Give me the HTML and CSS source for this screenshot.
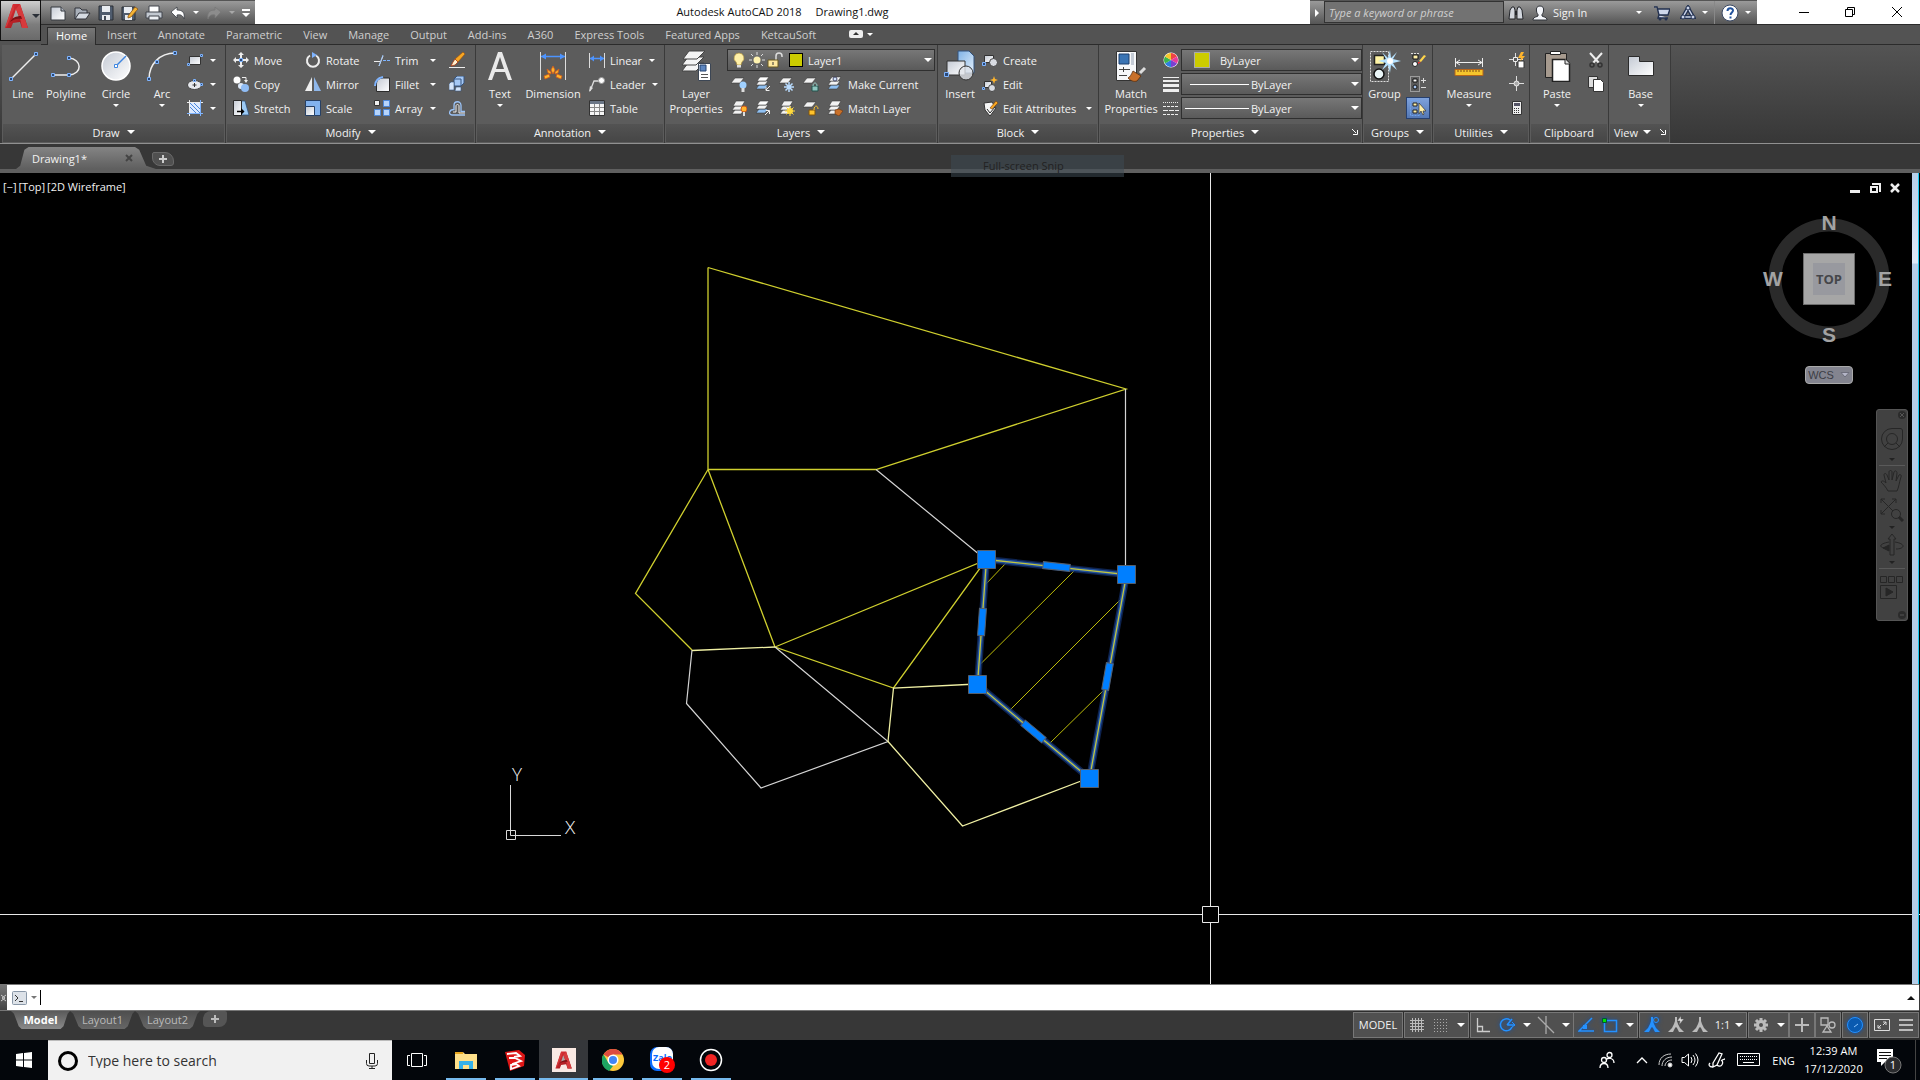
FILE: index.html
```html
<!DOCTYPE html>
<html lang="en">
<head>
<meta charset="utf-8">
<title>Autodesk AutoCAD 2018 - Drawing1.dwg</title>
<link rel="stylesheet" href="styles.css">
</head>
<body>
<svg class="defs" width="0" height="0" aria-hidden="true">
  <defs>
    <linearGradient id="gw" x1="0" y1="0" x2="1" y2="1"><stop offset="0" stop-color="#c4cad4"/><stop offset="1" stop-color="#fff"/></linearGradient>
    <linearGradient id="gb" x1="0" y1="0" x2="1" y2="1"><stop offset="0" stop-color="#7fb2e6"/><stop offset="1" stop-color="#e4f0fb"/></linearGradient>
    <linearGradient id="gr" x1="0" y1="0" x2="1" y2="1"><stop offset="0" stop-color="#e8343a"/><stop offset="1" stop-color="#8e1216"/></linearGradient>
  </defs>
  <symbol id="stack" viewBox="0 0 16 16"><g fill="#f2f2f2" stroke="#3a3a3a" stroke-width=".6"><path d="M4 10h9l-3 4H1z"/><path d="M4 6h9l-3 4H1z"/><path d="M5 1h9l-3 5H2z"/></g></symbol>
  <symbol id="stackb" viewBox="0 0 16 16"><g stroke="#3a3a3a" stroke-width=".6"><path d="M4 9h9l-3 4H1z" fill="#8fc0f2"/><path d="M4 5h9l-3 4H1z" fill="#f2f2f2"/><path d="M5 1h9l-3 4H2z" fill="#fff"/></g></symbol>
  <symbol id="sheet" viewBox="0 0 16 16"><path d="M4 2h9L9 7H0z" fill="#f2f2f2" stroke="#3a3a3a" stroke-width=".6"/></symbol>
  <symbol id="person" viewBox="0 0 16 16"><path d="M8 1c3 0 4 2 3.500 5-.3 2-1 3-1.500 3.500V11c1 .8 4 1 5 3v1H1v-1c1-2 4-2.200 5-3V9.500C5.500 9 4.800 8 4.500 6 4 3 5 1 8 1z" fill="#f3f5fa" stroke="#2f3238"/></symbol>
  <symbol id="annot" viewBox="0 0 16 16"><path d="M7 0h2v4l1 3 2 4 4 4h-5l-2-4-1-1-1 1-2 4H0l4-4 2-4 1-3z"/></symbol>
  <symbol id="logo" viewBox="0 0 26 26"><path d="M9 1h7l8 24h-6l-2-6-7 1-2 5H1z" fill="url(#gr)"/><path d="M12 6l-3 9 6-1z" fill="#aaa6a6"/><path d="M9 1l1 5-7 17-2 2zM16 1l-4 5 4 9 2 10h6z" fill="#d63a3c"/><path d="M6 19c2-4 6-6 11-6l1 3c-5-1-8 0-12 3z" fill="#7d1114"/></symbol>
</svg>

<header class="top">
  <button class="app-btn" aria-label="Application menu"><svg width="26" height="26"><use href="#logo"/></svg><i class="caret dark"></i></button>
  <div class="titlebar">
    <div class="qat">
      <button aria-label="New"><svg width="18" height="16"><path d="M2 2h10l4 4v9H2z" fill="url(#gw)" stroke="#35383e"/><path d="M12 2v4h4" fill="#aeb4bd" stroke="#35383e"/></svg></button>
      <button aria-label="Open"><svg width="18" height="16"><path d="M2 14V3h5l2 2h5v3" fill="#a9b0ba" stroke="#30333a"/><path d="M2 14l4-6h11l-4 6z" fill="#d5dae2" stroke="#30333a"/></svg></button>
      <button aria-label="Save"><svg width="16" height="16"><path d="M1 1h14v14H1z" fill="#4f5c6e" stroke="#2b2e34"/><path d="M4 1h8v6H4zM4 10h8v5H4z" fill="#e8ecf1"/><path d="M6 11h2v4H6z" fill="#444c59"/></svg></button>
      <button aria-label="Save As"><svg width="18" height="16"><path d="M1 2h13v13H1z" fill="#4f5c6e" stroke="#2b2e34"/><path d="M3 2h8v6H3zM4 10h7v5H4z" fill="#e8ecf1"/><path d="M7 11l7-9 3 2-7 8-3 1z" fill="#f5b335" stroke="#7c4a12" stroke-width=".7"/></svg></button>
      <button aria-label="Plot"><svg width="18" height="16"><path d="M4 1h10v7H4z" fill="#fff" stroke="#41454c"/><path d="M1 7h16v6H1z" fill="#c3c9d1" stroke="#41454c"/><path d="M4 11h10v4H4z" fill="#eef1f5" stroke="#41454c"/></svg></button>
      <button aria-label="Undo"><svg width="16" height="16"><path d="M1 7l6-5v3c6 0 8 3 7 9-1-3-3-5-7-4v3z" fill="#fff" stroke="#3b3f46" stroke-width=".8"/></svg></button>
      <button class="narrow" aria-label="Undo list"><i class="caret small"></i></button>
      <button aria-label="Redo"><svg width="16" height="16"><path d="M15 7L9 2v3C3 5 1 8 2 14c1-3 3-5 7-4v3z" fill="#8c8c8c" stroke="#777" stroke-width=".8"/></svg></button>
      <button class="narrow" aria-label="Redo list"><i class="caret small dim"></i></button>
      <button class="narrow bar" aria-label="Customize toolbar"><i class="caret"></i></button>
    </div>
    <h1><span>Autodesk AutoCAD 2018</span><span>Drawing1.dwg</span></h1>
    <div class="info">
      <button class="info-toggle" aria-label="Toggle search"><i class="caret right"></i></button>
      <input type="text" placeholder="Type a keyword or phrase" aria-label="Search help">
      <button class="i24" aria-label="Find"><svg width="16" height="16"><path d="M2 5l2-3h2l1 3v9H1zM14 5l-2-3h-2L9 5v9h6z" fill="#d3d7de" stroke="#24262b"/><path d="M7 6h2v4H7z" fill="#24262b"/></svg></button>
      <button class="signin"><svg width="16" height="16"><use href="#person"/></svg><span>Sign In</span><i class="caret small"></i></button>
      <button class="i24" aria-label="Store"><svg width="16" height="16"><path d="M0 2h3l2 8h9l2-6H4M5 10l-1 3h10" fill="#cdd6ea" stroke="#22304f" stroke-width="1.400"/><circle cx="6" cy="14" r="1.500" fill="#22304f"/><circle cx="12" cy="14" r="1.500" fill="#22304f"/></svg></button>
      <button class="i24 pair" aria-label="A360"><svg width="16" height="16"><path d="M8 3l5 9H3z" fill="none" stroke="#22304f" stroke-width="4"/><path d="M8 3l5 9H3z" fill="none" stroke="#c9d2e8" stroke-width="1.500"/><g fill="#c9d2e8" stroke="#22304f"><circle cx="8" cy="3" r="2"/><circle cx="3" cy="12" r="2"/><circle cx="13" cy="12" r="2"/></g></svg><i class="caret small"></i></button>
      <button class="help" aria-label="Help"><svg width="18" height="18"><circle cx="9" cy="9" r="8" fill="#fff" stroke="#3b4963"/><path d="M6.500 7c0-3.500 5.500-3.500 5.500-.5C12 8.500 9.500 8.500 9.500 11M9.500 12.500v2" fill="none" stroke="#24549e" stroke-width="2"/></svg><i class="caret small"></i></button>
    </div>
    <div class="win">
      <button aria-label="Minimize"><svg width="12" height="12"><path d="M1 6.500h10" stroke="#000"/></svg></button>
      <button aria-label="Restore"><svg width="12" height="12"><path d="M1.500 3.500h7v7h-7zM3.500 3V1.500h7v7H9" fill="none" stroke="#000"/></svg></button>
      <button aria-label="Close"><svg width="12" height="12"><path d="M1 1l10 10M11 1L1 11" stroke="#000"/></svg></button>
    </div>
  </div>
  <nav class="tabs">
    <button class="on">Home</button><button>Insert</button><button>Annotate</button><button>Parametric</button><button>View</button><button>Manage</button><button>Output</button><button>Add-ins</button><button>A360</button><button>Express Tools</button><button>Featured Apps</button><button>KetcauSoft</button>
    <button class="minimize" aria-label="Minimize ribbon"><svg width="14" height="8"><rect width="14" height="8" rx="2" fill="#eee"/><path d="M4 5h6L7 2z" fill="#333"/></svg><i class="caret small"></i></button>
  </nav>
</header>

<section class="ribbon">
  <div class="panel draw">
    <div class="body">
      <button class="big"><svg width="32" height="32"><path d="M5 28L29 4" stroke="#eee" stroke-width="1.500"/><g fill="#2b4a78" stroke="#7fb4ff"><path d="M2.500 27.500h3v3h-3zM27.500 2.500h3v3h-3z"/></g></svg><span>Line</span></button>
      <button class="big"><svg width="32" height="32"><path d="M3 25h16c14-1 13-16 0-17" fill="none" stroke="#eee" stroke-width="1.500"/><g fill="#2b4a78" stroke="#7fb4ff"><path d="M1.500 23.500h3v3h-3zM17.500 23.500h3v3h-3zM17.500 6.500h3v3h-3z"/></g></svg><span>Polyline</span></button>
      <button class="big"><svg width="32" height="32"><circle cx="16" cy="16" r="14" fill="url(#gw)" stroke="#fff" stroke-width="1.500"/><path d="M16 16L26 6" stroke="#3f86e0" stroke-width="1.500"/><path d="M14.500 14.500h3v3h-3z" fill="#fff" stroke="#3f86e0"/></svg><span>Circle</span><i class="caret small"></i></button>
      <button class="big"><svg width="32" height="32"><path d="M3 29C3 14 14 3 29 3" fill="none" stroke="#eee" stroke-width="1.500"/><g fill="#2b4a78" stroke="#7fb4ff"><path d="M1.500 27.500h3v3h-3zM9.500 10.500h3v3h-3zM27.500 1.500h3v3h-3z"/></g></svg><span>Arc</span><i class="caret small"></i></button>
      <div class="col">
        <button aria-label="Rectangle"><svg width="16" height="16"><path d="M2.500 4.500h11v8h-11z" fill="url(#gw)" stroke="#333"/><g fill="#2b4a78" stroke="#7fb4ff"><path d="M.5 11.500h2v2h-2zM13.500 2.500h2v2h-2z"/></g></svg><i class="caret small"></i></button>
        <button aria-label="Ellipse"><svg width="16" height="16"><ellipse cx="7.500" cy="9" rx="7" ry="4.500" fill="#e7e9ee" stroke="#444"/><path d="M7.500 7v4M5.500 9h4" stroke="#333"/><g fill="#2b4a78" stroke="#7fb4ff"><path d="M6.500 3.500h2v2h-2zM13.500 7.500h2v2h-2z"/></g></svg><i class="caret small"></i></button>
        <button aria-label="Hatch"><svg width="16" height="16"><path d="M3 3h10v10H3z" fill="#dceaff"/><path d="M3 3l10 10M3 7l6 6M7 3l6 6" stroke="#4b86d8"/><path d="M0 2.500h16M2.500 0v16" stroke="#eee"/><path d="M13.500 0v16M0 13.500h16" stroke="#7fb4ff"/></svg><i class="caret small"></i></button>
      </div>
    </div>
    <button class="ptitle">Draw<i class="caret"></i></button>
  </div>

  <div class="panel modify">
    <div class="body">
      <div class="col">
        <button><svg width="16" height="16"><path d="M8 0l3 3H5zM8 16l3-3H5zM0 8l3-3v6zM16 8l-3-3v6z" fill="#eee"/><path d="M8 3v3M8 10v3M3 8h3M10 8h3" stroke="#eee" stroke-width="2"/><path d="M6.500 6.500h3v3h-3z" fill="#2b4a78" stroke="#7fb4ff"/></svg>Move</button>
        <button><svg width="16" height="16"><circle cx="4" cy="4" r="3.500" fill="#fff"/><circle cx="8" cy="10" r="3" fill="#dce8f8"/><circle cx="12" cy="12" r="4" fill="#8fbcf5"/><path d="M9 1.500h4v3" fill="none" stroke="#eee"/><path d="M11 4h4l-2 3z" fill="#eee"/></svg>Copy</button>
        <button><svg width="16" height="16"><path d="M8 1h4l4 14H8z" fill="#9ccaf5" stroke="#274a77" stroke-width=".7"/><path d="M.5.500h8v15h-8z" fill="url(#gw)" stroke="#2b2b2b"/><path d="M4 11.500h6" stroke="#000" stroke-width="1.500"/><path d="M8 8l3.500 3.500L8 15z"/></svg>Stretch</button>
      </div>
      <div class="col">
        <button><svg width="16" height="16"><path d="M5 3.500a6 6 0 1 0 6 0" fill="none" stroke="#eee" stroke-width="2"/><path d="M7 0l5 3-5 3z" fill="#7fb4ff"/></svg>Rotate</button>
        <button><svg width="16" height="16"><path d="M7 1v14H0z" fill="#eee"/><path d="M9 1v14h7z" fill="#8fb7ea"/></svg>Mirror</button>
        <button><svg width="16" height="16"><path d="M.5.500h15v15h-15z" fill="#82b2ee" stroke="#274064"/><path d="M.5 6.500h9v9h-9z" fill="url(#gw)" stroke="#274064"/></svg>Scale</button>
      </div>
      <div class="col">
        <button class="spread"><svg width="16" height="16"><path d="M0 9.500h6M9 4L5 14" stroke="#eee"/><path d="M9 3L5 14" stroke="#9cc4f8"/><path d="M9 8.500h3M13 8.500h3" stroke="#7fb4ff"/></svg><span>Trim</span><i class="caret small"></i></button>
        <button class="spread"><svg width="16" height="16"><path d="M2.500 15.500V8c0-4 3-6 7-6h6v13.500z" fill="url(#gw)" stroke="#2b2b2b"/><path d="M1 10C1 5 4 2 9 1" fill="none" stroke="#7fb4ff" stroke-width="2"/></svg><span>Fillet</span><i class="caret small"></i></button>
        <button class="spread"><svg width="16" height="16"><path d="M.5.500h5v5h-5z" fill="#eee" stroke="#333"/><g fill="#b6d4fb" stroke="#4e88d8"><path d="M9.500.500h6v6h-6zM.5 9.500h6v6h-6zM9.500 9.500h6v6h-6z"/></g></svg><span>Array</span><i class="caret small"></i></button>
      </div>
      <div class="col">
        <button aria-label="Erase"><svg width="16" height="16"><path d="M14 0l2 2-7 8-3-3z" fill="#f6a623" stroke="#9a4d08" stroke-width=".6"/><path d="M6 7l3 3-3 3-4 1 2-4z" fill="#fff1cf" stroke="#b23b12" stroke-width=".8"/><path d="M0 15.500h16" stroke="#eee"/></svg></button>
        <button aria-label="Explode"><svg width="16" height="16"><path d="M5 3l3-3h7v7l-3 3H5z" fill="#a5c8f5" stroke="#36557f"/><path d="M5 3h7v7" fill="none" stroke="#36557f"/><path d="M0 8l2-2h3v8H0zM7 11h5v4H6z" fill="#d5e5fa" stroke="#36557f" stroke-width=".6"/></svg></button>
        <button aria-label="Offset"><svg width="16" height="16"><path d="M16 11.500h-4v-6c0-5-7-5-7 0v4c-5 0-6 5-2 5.500h13" fill="none" stroke="#9cc4f8" stroke-width="1.300"/><path d="M16 13h-6V6c0-2-3-2-3 0v6H4" fill="none" stroke="#eee"/></svg></button>
      </div>
    </div>
    <button class="ptitle">Modify<i class="caret"></i></button>
  </div>

  <div class="panel annotation">
    <div class="body">
      <button class="big"><svg width="32" height="32"><path d="M14 2h4l10 28h-4l-3-8H11l-3 8H4zM16 7l-4 12h8z" fill="#e9e9e9"/></svg><span>Text</span><i class="caret small"></i></button>
      <button class="big"><svg width="32" height="32"><path d="M3.500 2v28M28.500 2v28" stroke="#ddd"/><path d="M4 6.500h24" stroke="#4d94ff" stroke-width="1.500"/><path d="M4 6.500l5-3v6zM28 6.500l-5-3v6z" fill="#4d94ff"/><g fill="#ffb52c" stroke="#d0591a" stroke-width=".8"><path d="M16 16l2 4-2 4-2-4zM10 19l4 3v2l-3-1zM22 19l-4 3v2l3-1zM7 26l5-2 1 3-5 2zM25 26l-5-2-1 3 5 2z"/></g></svg><span>Dimension</span></button>
      <div class="col">
        <button class="spread"><svg width="16" height="16"><path d="M.5 1v15M15.500 1v15" stroke="#ddd"/><path d="M1 6.500h14" stroke="#4d94ff" stroke-width="1.500"/><path d="M1 6.500l4-3v6zM15 6.500l-4-3v6z" fill="#4d94ff"/></svg><span>Linear</span><i class="caret small"></i></button>
        <button class="spread wide"><svg width="16" height="16"><path d="M1 15L5 5h6" fill="none" stroke="#ddd" stroke-width="1.300"/><path d="M0 16l1-6 3 2z" fill="#ddd"/><circle cx="12.500" cy="4.500" r="3" fill="#fff" stroke="#999"/></svg><span>Leader</span><i class="caret small"></i></button>
        <button><svg width="16" height="16"><path d="M.5.500h15v15h-15z" fill="#f5f5f5" stroke="#333"/><path d="M1 1h14v3H1z" fill="#6b7686"/><path d="M1 7.500h14M1 11.500h14M5.500 4v11M10.500 4v11" stroke="#888"/></svg>Table</button>
      </div>
    </div>
    <button class="ptitle">Annotation<i class="caret"></i></button>
  </div>

  <div class="panel layers">
    <div class="body">
      <button class="big"><svg width="32" height="32"><g fill="#f4f4f4" stroke="#444"><path d="M8 13h16l-8 8H2z"/><path d="M8 7h16l-8 8H2z"/><path d="M9 1h16l-8 8H3z"/></g><path d="M18.500 13.500h12v17h-12z" fill="#fff" stroke="#3c4654"/><path d="M20 15h6v6h-6z" fill="#5d86c0" stroke="#25436f"/><path d="M21 24.500h7M21 27.500h7" stroke="#555"/></svg><span>Layer<br>Properties</span></button>
      <div class="layer-tools">
        <label class="combo"><svg width="16" height="16"><path d="M8 1a5 5 0 0 1 3 9l-1 3H6l-1-3a5 5 0 0 1 3-9z" fill="#fff0a8" stroke="#a58a3b" stroke-width=".7"/><path d="M6 13h4v2.500H6z" fill="#ddd"/></svg><svg width="16" height="16"><circle cx="8" cy="8" r="3.500" fill="#fff3b0"/><path d="M8 0v3M8 13v3M0 8h3M13 8h3M2 2l2 2M12 12l2 2M14 2l-2 2M4 12l-2 2" stroke="#ddd"/></svg><svg width="16" height="16"><path d="M9 8V4c0-4 6-4 6 0v1" fill="none" stroke="#ddd" stroke-width="1.500"/><path d="M1 8h10v7H1z" fill="#ffe9a0" stroke="#6b5a20"/><path d="M6 10v3" stroke="#333"/></svg><i class="swatch framed"></i><select aria-label="Layer"><option>Layer1</option></select><i class="caret"></i></label>
        <div class="icon-row">
          <button aria-label="Off"><svg width="16" height="16"><use href="#sheet"/><circle cx="12" cy="9" r="3.500" fill="#9fd0ff"/><path d="M10.500 12h3v4h-3z" fill="#ddd"/></svg></button>
          <button aria-label="Isolate"><svg width="16" height="16"><use href="#stackb"/><path d="M15 10l-4 4M11 11v3.500h3.500" stroke="#eee" fill="none"/></svg></button>
          <button aria-label="Freeze"><svg width="16" height="16"><use href="#sheet"/><path d="M10 6v10M5 11h10M6.500 7.500l7 7M13.500 7.500l-7 7" stroke="#b9dcff" stroke-width="1.500"/></svg></button>
          <button aria-label="Lock"><svg width="16" height="16"><use href="#sheet"/><path d="M9 10h6v5H9z" fill="#8ec5bf" stroke="#23524c"/><path d="M10 10c0-4 4-4 4 0" fill="none" stroke="#9fd3cd"/></svg></button>
          <button class="text"><svg width="16" height="16"><use href="#stackb"/><circle cx="8" cy="3" r="2" fill="#cfe3fb" stroke="#446"/></svg>Make Current</button>
        </div>
        <div class="icon-row">
          <button aria-label="Turn all on"><svg width="16" height="16"><use href="#stack"/><circle cx="13" cy="9" r="3" fill="#ffb52c" stroke="#d0591a"/><path d="M12 12h2v4h-2z" fill="#ddd"/></svg></button>
          <button aria-label="Unisolate"><svg width="16" height="16"><use href="#stackb"/><path d="M10 15l4-4M11 10.500h3.500V14" stroke="#eee" fill="none"/></svg></button>
          <button aria-label="Thaw all"><svg width="16" height="16"><use href="#stack"/><circle cx="11" cy="11" r="3" fill="#ffd93b"/><path d="M11 6v10M6 11h10M7.500 7.500l7 7M14.500 7.500l-7 7" stroke="#ffd93b"/></svg></button>
          <button aria-label="Unlock"><svg width="16" height="16"><use href="#sheet"/><path d="M6 10h6v5H6z" fill="#ffc32c" stroke="#80540c"/><path d="M11 10c0-5 4-5 4-1" fill="none" stroke="#ffc32c"/></svg></button>
          <button class="text"><svg width="16" height="16"><use href="#stack"/><path d="M8 10l4-1 4 2-4 5-4-2z" fill="#c8702a" stroke="#6b3510" stroke-width=".6"/></svg>Match Layer</button>
        </div>
      </div>
    </div>
    <button class="ptitle">Layers<i class="caret"></i></button>
  </div>

  <div class="panel block">
    <div class="body">
      <button class="big"><svg width="32" height="32"><path d="M14 1h11l5 5v17H14z" fill="url(#gb)" stroke="#33527c"/><path d="M3 11h18v14H3z" fill="url(#gw)" stroke="#333"/><circle cx="22" cy="23" r="7" fill="#dfe2e8" fill-opacity=".8" stroke="#333"/><path d="M.5 22.500h4v4h-4z" fill="#2b4a78" stroke="#7fb4ff"/></svg><span>Insert</span></button>
      <div class="col">
        <button><svg width="16" height="16"><path d="M2.500 3.500h9v7h-9z" fill="url(#gw)" stroke="#333"/><circle cx="11.500" cy="10.500" r="4" fill="#d8dbe2" stroke="#444"/><path d="M.5 10.500h3v3h-3z" fill="#2b4a78" stroke="#7fb4ff"/></svg>Create</button>
        <button><svg width="16" height="16"><path d="M2.500 5.500h7v6h-7z" fill="url(#gw)" stroke="#333"/><circle cx="10" cy="12" r="3.500" fill="#d8dbe2" stroke="#444"/><path d="M.5 11.500h2v2h-2z" fill="#2b4a78" stroke="#7fb4ff"/><path d="M12 0l1 3 3 1-3 1-1 3-1-3-3-1 3-1z" fill="#ffb52c"/></svg>Edit</button>
        <button class="spread"><svg width="16" height="16"><path d="M2 3l8-1 4 6-6 8-5-6z" fill="#f5f5f5" stroke="#333"/><path d="M5 9l3 4 5-6" fill="none" stroke="#222"/><path d="M8 8l6-7 2 2-6 6z" fill="#f6a623" stroke="#7c3e08" stroke-width=".6"/></svg><span>Edit Attributes</span><i class="caret small"></i></button>
      </div>
    </div>
    <button class="ptitle">Block<i class="caret"></i></button>
  </div>

  <div class="panel properties">
    <div class="body">
      <button class="big"><svg width="32" height="32"><path d="M1.500 1.500h20v29h-20z" fill="#f7f8fa" stroke="#333"/><path d="M4 4h10v10H4z" fill="#3a74b4" stroke="#1d3f6d"/><path d="M16 3h3v12h-3z" fill="#c5ccd6"/><path d="M4 19.500h11M4 25.500h8M8.500 17v5" stroke="#444"/><path d="M30 18l-5 5" stroke="#ddd" stroke-width="3"/><path d="M18 21l8 5-4 5c-3 1-6 0-9-3 2-1 3-3 5-7z" fill="#c8702a" stroke="#5b2e0c" stroke-width=".8"/></svg><span>Match<br>Properties</span></button>
      <div class="col prop-icons">
        <svg width="16" height="16"><circle cx="8" cy="8" r="7.500" fill="#fff"/><path d="M8 8V1a7 7 0 0 1 6 3.500z" fill="#e44"/><path d="M8 8l6-3.500a7 7 0 0 1 0 7z" fill="#e83a9a"/><path d="M8 8l6 3.500A7 7 0 0 1 8 15z" fill="#7a3fd0"/><path d="M8 8v7a7 7 0 0 1-6-3.500z" fill="#2f7de0"/><path d="M8 8l-6 3.500a7 7 0 0 1 0-7z" fill="#3cb54a"/><path d="M8 8L2 4.500A7 7 0 0 1 8 1z" fill="#f5c52c"/></svg>
        <svg width="16" height="16"><path d="M0 1.500h16" stroke="#eee"/><path d="M0 5h16" stroke="#eee" stroke-width="2"/><path d="M0 9.500h16" stroke="#eee" stroke-width="3"/><path d="M0 14.500h16" stroke="#eee" stroke-width="3"/></svg>
        <svg width="16" height="16" stroke="#eee"><path d="M0 2.500h16" stroke-dasharray="1 1"/><path d="M0 6.500h16" stroke-dasharray="3 1"/><path d="M0 10.500h16" stroke-dasharray="5 1"/><path d="M0 14.500h16" stroke-dasharray="3 1"/></svg>
      </div>
      <div class="col">
        <label class="combo"><i class="swatch plain"></i><select aria-label="Color"><option>ByLayer</option></select><i class="caret"></i></label>
        <label class="combo line"><i class="rule"></i><select aria-label="Lineweight"><option>ByLayer</option></select><i class="caret"></i></label>
        <label class="combo line long"><i class="rule"></i><select aria-label="Linetype"><option>ByLayer</option></select><i class="caret"></i></label>
      </div>
    </div>
    <button class="ptitle">Properties<i class="caret"></i><svg class="launch" width="6" height="6"><path d="M0 0l4 4M5.500 1v4.500H1" fill="none" stroke="#fff"/></svg></button>
  </div>

  <div class="panel groups">
    <div class="body">
      <button class="big"><svg width="32" height="32"><path d="M1.500 1.500h18v30h-18z" fill="none" stroke="#ddd" stroke-dasharray="2 1"/><path d="M5.500 5.500h10v9h-10z" fill="#fff4a5" stroke="#222" stroke-width="1.500"/><circle cx="10" cy="24" r="5" fill="#eaf5f7" stroke="#111" stroke-width="1.500"/><path d="M21 0l1 8 6-6-4 7 8 2-8 2 4 7-6-5-1 8-2-8-6 5 4-7-8-2 8-2-4-7 6 6z" fill="#b6e2ff"/><circle cx="21" cy="11" r="3" fill="#fff"/></svg><span>Group</span></button>
      <div class="col">
        <button aria-label="Ungroup"><svg width="16" height="16"><path d="M1 1.500h8" stroke="#ddd" stroke-dasharray="2 1"/><path d="M3 3h5v4H3z" fill="#fff0a8" stroke="#111"/><circle cx="5" cy="12" r="2.500" fill="#fff" stroke="#222"/><path d="M9 9l5-6 2 1-5 6z" fill="#ffd54a"/><path d="M8 10l3 0-3 2z" fill="#e33"/></svg></button>
        <button aria-label="Group edit"><svg width="16" height="16"><path d="M.5.500h9v15h-9z" fill="none" stroke="#ddd" stroke-dasharray="1 1"/><path d="M3 3h4v3H3z" fill="#fff" stroke="#111"/><circle cx="5" cy="11" r="2" fill="#a9c8f2" stroke="#111"/><path d="M11 4.500h5M13.500 2v5M11 11.500h5" stroke="#ddd"/></svg></button>
        <button class="active" aria-label="Group selection"><svg width="16" height="16"><path d="M.5.500h9v15h-9z" fill="none" stroke="#6fa3ee" stroke-dasharray="2 1"/><path d="M3 3h4v3H3zM3 10h4v3H3z" fill="#fff0a8" stroke="#222"/><path d="M9 3v11l2-3 2 4 1-1-1-3h3z" fill="#fff0a8" stroke="#333" stroke-width=".7"/></svg></button>
      </div>
    </div>
    <button class="ptitle">Groups<i class="caret"></i></button>
  </div>

  <div class="panel utilities">
    <div class="body">
      <button class="big"><svg width="32" height="32"><path d="M2.500 8v9M29.500 8v9M3 12.500h26M7 10l-4 2.500L7 15M25 10l4 2.500-4 2.500" fill="none" stroke="#eee"/><path d="M2 19.500h28v6H2z" fill="#f5c52c" stroke="#b5651a"/><path d="M5 20v2M8 20v2M11 20v2M14 20v2M17 20v2M20 20v2M23 20v2M26 20v2" stroke="#7c4a12"/></svg><span>Measure</span><i class="caret small"></i></button>
      <div class="col">
        <button aria-label="Quick select"><svg width="16" height="16"><path d="M0 7.500h14M6.500 1v13" stroke="#ddd"/><path d="M4.500 5.500h4v4h-4z" fill="#5c5c5c" stroke="#eee"/><path d="M12 0L9 6h3l-1 4 5-6h-3l2-4z" fill="#ffb52c"/><path d="M9 9h6v7H9z" fill="#fff" stroke="#333"/></svg></button>
        <button aria-label="ID point"><svg width="16" height="16"><path d="M0 7.500h15M7.500 0v15" stroke="#ddd"/><circle cx="7.500" cy="7.500" r="2.500" fill="#aaa" stroke="#eee"/></svg></button>
        <button aria-label="Calculator"><svg width="16" height="16"><path d="M3.500 1.500h9v13h-9z" fill="#eee" stroke="#333"/><path d="M5 3h6v3H5z" fill="#556"/><path d="M5 8.500h6M5 10.500h6M5 12.500h6" stroke="#333" stroke-dasharray="1 1"/></svg></button>
      </div>
    </div>
    <button class="ptitle">Utilities<i class="caret"></i></button>
  </div>

  <div class="panel clipboard">
    <div class="body">
      <button class="big"><svg width="32" height="32"><path d="M4.500 3.500h21v24h-21z" fill="#a69a8e" stroke="#222"/><path d="M9.500 1.500h10v3h-10z" fill="#fff" stroke="#222"/><path d="M11.500 9.500h13l4 4v18h-17z" fill="#fff" stroke="#222" stroke-width="1.500"/><path d="M24 9v5h5" fill="#ddd" stroke="#222"/></svg><span>Paste</span><i class="caret small"></i></button>
      <div class="col">
        <button aria-label="Cut"><svg width="16" height="16"><path d="M2 1l9 10M14 1L5 11" stroke="#eee" stroke-width="2"/><circle cx="4" cy="13" r="2" fill="none" stroke="#333" stroke-width="1.500"/><circle cx="12" cy="13" r="2" fill="none" stroke="#333" stroke-width="1.500"/></svg></button>
        <button aria-label="Copy clip"><svg width="16" height="16"><path d="M.5.500h9v11h-9z" fill="#ddd" stroke="#333"/><path d="M5.500 3.500h7l3 3v9h-10z" fill="#fff" stroke="#333"/></svg></button>
      </div>
    </div>
    <span class="ptitle">Clipboard</span>
  </div>

  <div class="panel view">
    <div class="body">
      <button class="big"><svg width="32" height="32"><path d="M3.500 6.500h11v5h14v14h-25z" fill="url(#gw)" stroke="#2b2b2b"/></svg><span>Base</span><i class="caret small"></i></button>
    </div>
    <button class="ptitle">View<i class="caret"></i><svg class="launch" width="6" height="6"><path d="M0 0l4 4M5.500 1v4.500H1" fill="none" stroke="#fff"/></svg></button>
  </div>
</section>

<div class="filetabs">
  <button class="file on"><span>Drawing1*</span><svg width="8" height="8"><path d="M1 1l6 6M7 1L1 7" stroke="#444" stroke-width="2"/></svg></button>
  <button class="add" aria-label="New drawing"><svg width="8" height="8"><path d="M4 0v8M0 4h8" stroke="#ccc" stroke-width="2"/></svg></button>
  <div class="snip">Full-screen Snip</div>
</div>

<main class="viewport">
  <svg class="drawing" width="100%" height="100%">
    <g fill="none" stroke="#cfcf2e" stroke-width="1.300">
      <path d="M708 94.500L1126 216L876 296.500H708V94.500M708 296.500L635.500 420.500L692 477M708 296.500L775 474L893.500 515L986 387L775 474"/>
    </g>
    <g fill="none" stroke="#d4d4d4" stroke-width="1.200">
      <path d="M876 296.500L986 387M1125.500 216V401M692 477L686.500 530.500L761 615L888 568.500L775 474"/>
    </g>
    <g fill="none" stroke="#f0f0a4" stroke-width="1.300">
      <path d="M692 477.500L775 474M977 511L893.500 515L888 568.500L962.500 653L1089 605"/>
    </g>
    <path d="M1007 389L985 412M1074 398L977.500 494M1122 425L1009 538M1104 517L1049 571" stroke="#bcbc08"/>
    <path class="glow" d="M986.500 386.500L1126.500 401.500L1089.500 605.500L977.500 511.500z"/>
    <path class="glow core" d="M986.500 386.500L1126.500 401.500L1089.500 605.500L977.500 511.500z"/>
    <path d="M986.500 386.500L1126.500 401.500L1089.500 605.500L977.500 511.500z" fill="none" stroke="#c3c741" stroke-width="1.300"/>
    <g fill="#007fff" stroke="#555f6c">
      <path d="M977.500 377.500h18v18h-18zM1117.500 392.500h18v18h-18zM968.500 502.500h18v18h-18zM1080.500 596.500h18v18h-18z"/>
      <rect x="-13.500" y="-3.500" width="27" height="7" transform="translate(1056.500 393.500) rotate(6)"/>
      <rect x="-13.500" y="-3.500" width="27" height="7" transform="translate(982 449) rotate(94)"/>
      <rect x="-13.500" y="-3.500" width="27" height="7" transform="translate(1107.500 503.500) rotate(100)"/>
      <rect x="-13.500" y="-3.500" width="27" height="7" transform="translate(1033.500 558.500) rotate(40)"/>
    </g>
    <path d="M510.500 612v50.500H561M506.500 657.500h9v9h-9z" fill="none" stroke="#d8d8d8"/>
    <text class="axis" x="512" y="608">Y</text><text class="axis" x="565" y="661">X</text>
    <g stroke="#e8e8e8" fill="none"><path d="M1210.500 0v733M1210.500 749v62"/><path d="M0 741.500h1202"/><line x1="1219" y1="741.500" x2="100%" y2="741.500"/><path d="M1202.500 733.500h16v16h-16z"/></g>
  </svg>
  <p class="vp-label"><button>[−]</button><button>[Top]</button><button>[2D Wireframe]</button></p>
  <div class="vp-win">
    <button aria-label="Minimize drawing"><svg width="12" height="12"><path d="M1 8h10v3H1z" fill="#eee"/></svg></button>
    <button aria-label="Restore drawing"><svg width="12" height="12"><path d="M2 5h6v5H2zM4 3V2h7v7h-1" fill="none" stroke="#eee" stroke-width="2"/></svg></button>
    <button aria-label="Close drawing"><svg width="12" height="12"><path d="M2 2l8 8M10 2l-8 8" stroke="#eee" stroke-width="2.500"/></svg></button>
  </div>
  <div class="cube">
    <svg width="140" height="140"><circle cx="70" cy="70" r="54" fill="none" stroke="#2a2a2a" stroke-width="13"/><rect x="44.500" y="44.500" width="51" height="51" fill="#a6a6a6" stroke="#6d6d6d"/><rect x="54" y="54" width="32" height="32" fill="#98999f"/><g class="points"><text x="70" y="21">N</text><text x="126" y="77">E</text><text x="70" y="133">S</text><text x="14" y="77">W</text></g><text class="face" x="70" y="75">TOP</text></svg>
    <button class="wcs">WCS<svg width="10" height="6"><path d="M1 .500h8L5 5z" fill="#b5b6c8" stroke="#6e6f7c"/></svg></button>
  </div>
  <div class="navbar">
    <svg class="corner" width="8" height="8"><circle cx="4" cy="4" r="4" fill="#2b2b2b"/><path d="M2 2l4 4M6 2L2 6" stroke="#555"/></svg>
    <button class="n38" aria-label="Steering wheel"><svg width="24" height="24"><path d="M12 1.500h8c2 0 2.500 1 2.500 2.500v8a10.500 10.500 0 1 1-10.500-10.500z"/><circle cx="12" cy="12" r="5.500"/><path d="M8 16l-4 4M16 16l4 4"/></svg></button>
    <i class="caret small black"></i><hr>
    <button class="n26" aria-label="Pan"><svg width="24" height="24"><path d="M8 22c-2-4-5-7-7-9 1-2 3-1 5 1L4 6c0-2 2-2 3 0l2 5V3c0-2 3-2 3 0v8l2-8c1-2 3-1 3 1l-1 8 3-6c1-1 3 0 2 2-2 6-2 10-4 14z"/></svg></button>
    <button class="n28" aria-label="Zoom extents"><svg width="24" height="24"><path d="M1 1l15 15M16 1L1 16M1 5V1h4M12 1h4v4M1 12v4h4"/><circle cx="16" cy="16" r="4.500" fill="#414141"/><path d="M19 19l4 4" stroke-width="3"/></svg></button>
    <i class="caret small black"></i>
    <button class="n28" aria-label="Orbit"><svg width="24" height="24"><path d="M10 22V6H8l4-5 4 5h-2v16zM9 9c-11 2-11 6 0 7M15 9c12 2 9 7 1 7"/><path d="M3 15l6-3v6z" fill="#262626"/></svg></button>
    <i class="caret small black"></i><hr>
    <button class="n28" aria-label="ShowMotion"><svg width="24" height="24"><path d="M.500 1.500h6v6h-6zM8.500 1.500h6v6h-6zM16.500 1.500h6v6h-6zM.500 10.500h16v13h-16z"/><path d="M6 13l7 4-7 4z" fill="#262626"/></svg></button>
    <svg class="corner" width="8" height="8"><circle cx="4" cy="4" r="4" fill="#2b2b2b"/><path d="M2 4h4" stroke="#555"/></svg>
  </div>
  <i class="edge"></i>
</main>

<form class="command">
  <button type="button" class="grip" aria-label="Close command line"><svg width="6" height="8"><path d="M0 1l4 3-4 3M5 1L1 4l4 3" fill="none" stroke="#ccc"/></svg></button>
  <button type="button" class="prompt" aria-label="Recent commands"><svg width="16" height="16"><rect x=".500" y="1.500" width="14" height="13" rx="1" fill="#dde2e8" stroke="#8a98a8"/><path d="M3 5l3 3-3 3M7 11.500h4" fill="none" stroke="#333"/></svg><i class="caret small gray"></i></button>
  <i class="cursor"></i><input type="text" aria-label="Command">
  <i class="caret up"></i>
</form>

<footer class="status">
  <nav class="layouts">
    <button class="on">Model</button><button>Layout1</button><button>Layout2</button>
    <button class="plus" aria-label="New layout"><svg width="8" height="8"><path d="M4 0v8M0 4h8" stroke="#bbb" stroke-width="2"/></svg></button>
  </nav>
  <div class="toggles">
    <div class="grp"><button class="model">MODEL</button></div>
    <div class="grp">
      <button aria-label="Grid"><svg width="16" height="16" stroke="#bbb"><path d="M3.500 1v14M6.500 1v14M9.500 1v14M12.500 1v14"/><path d="M1 3.500h14M1 6.500h14M1 9.500h14M1 12.500h14" stroke-dasharray="2 1"/></svg></button>
      <button aria-label="Snap"><svg width="16" height="16" stroke="#aaa" stroke-dasharray="1 2"><path d="M1 2.500h14M1 5.500h14M1 8.500h14M1 11.500h14M1 14.500h14"/></svg></button>
      <button class="drop" aria-label="Snap options"><i class="caret"></i></button>
    </div>
    <div class="grp">
      <button aria-label="Ortho"><svg width="16" height="16"><path d="M2.500 1v13.500H15M3 9.500h4.500V14" fill="none" stroke="#ccc" stroke-width="1.300"/></svg></button>
      <button class="blue" aria-label="Polar"><svg width="16" height="16"><path d="M13 10a6 6 0 1 1-2-7M8 8h8M8 8l5-6" fill="none" stroke="#2491ff" stroke-width="1.500"/><path d="M13 5l3 3-3 2" fill="none" stroke="#2491ff"/></svg></button>
      <button class="drop" aria-label="Polar options"><i class="caret"></i></button>
      <button aria-label="Isometric"><svg width="18" height="18"><path d="M1 1l16 16M9 0v18" stroke="#aaa" stroke-width="1.300"/></svg></button>
      <button class="drop" aria-label="Isometric options"><i class="caret"></i></button>
      <i class="div"></i>
      <button class="blue" aria-label="Object snap tracking"><svg width="16" height="16"><path d="M14 1L1 14h15" fill="none" stroke="#2491ff" stroke-width="1.500"/><path d="M5 8h4v4H5z" fill="#2491ff"/></svg></button>
      <button class="blue" aria-label="Object snap"><svg width="16" height="16"><path d="M2.500 3.500h12v11h-12z" fill="none" stroke="#2491ff" stroke-width="1.500"/><path d="M.5 1.500h4v4h-4z" fill="#00e000" stroke="#053"/></svg></button>
      <button class="drop" aria-label="Object snap options"><i class="caret"></i></button>
    </div>
    <div class="grp">
      <button class="blue" aria-label="Annotation visibility"><svg width="16" height="18" fill="#2491ff"><use href="#annot"/><circle cx="12" cy="4" r="2.500" fill="#505050" stroke="#2491ff"/></svg></button>
      <button aria-label="Auto scale"><svg width="16" height="18" fill="#bbb"><use href="#annot"/><path d="M13 0l-4 5h3l-1 4 5-6h-3z" fill="#ddd" stroke="#505050" stroke-width=".5"/></svg></button>
      <button aria-label="Annotation scale"><svg width="16" height="18" fill="#bbb"><use href="#annot"/></svg></button>
      <button class="scale">1:1<i class="caret"></i></button>
    </div>
    <div class="grp snug"><button aria-label="Workspace"><svg width="14" height="14"><path d="M7 0v14M0 7h14M2 2l10 10M12 2L2 12" stroke="#bbb" stroke-width="3"/><circle cx="7" cy="7" r="5" fill="#bbb"/><circle cx="7" cy="7" r="2" fill="#505050"/></svg></button><button class="drop" aria-label="Workspace options"><i class="caret"></i></button></div>
    <div class="grp snug"><button aria-label="Annotation monitor"><svg width="14" height="14"><path d="M7 0v14M0 7h14" stroke="#bbb" stroke-width="2"/></svg></button></div>
    <div class="grp"><button aria-label="Isolate objects"><svg width="16" height="16" fill="none" stroke="#bbb" stroke-width="1.300"><path d="M1 1h7v7H1zM7 9l4 6H3z"/><circle cx="12" cy="8" r="3"/></svg></button></div>
    <div class="grp"><button class="blue" aria-label="Hardware acceleration"><svg width="18" height="18"><circle cx="9" cy="9" r="7.500" fill="#0a5ab0" stroke="#2491ff"/><path d="M8 11l4-3" stroke="#8cc6ff"/></svg></button></div>
    <div class="grp"><button aria-label="Clean screen"><svg width="16" height="14"><path d="M.5 1.500h15v11H.500z" fill="none" stroke="#ddd"/><path d="M12 4L9 7M9 4h3v3M4 10l3-3M7 10H4V7" fill="none" stroke="#ddd"/></svg></button><button aria-label="Customization"><svg width="14" height="14"><path d="M0 2h14M0 7h14M0 12h14" stroke="#bbb" stroke-width="2"/></svg></button></div>
  </div>
</footer>

<footer class="taskbar">
  <button class="start" aria-label="Start"><svg width="16" height="16" fill="#fff"><path d="M0 2l7-1v6.500H0zM8 1l8-1v7.500H8zM0 8.500h7V15l-7-1zM8 8.500h8V16l-8-1z"/></svg></button>
  <label class="search"><svg width="22" height="22"><circle cx="11" cy="11" r="8.500" fill="none" stroke="#000" stroke-width="3"/></svg><input type="text" placeholder="Type here to search" aria-label="Search Windows"><svg width="14" height="18" fill="none" stroke="#222"><path d="M4.500 1.500h5v10h-5zM1.500 8v3.500q0 2.500 2.500 2.500h6q2.500 0 2.500-2.500V8M7 14v3M4 16.500h6"/></svg></label>
  <div class="apps">
    <button aria-label="Task view"><svg width="20" height="16" fill="none" stroke="#fff"><path d="M4.500 1.500h11v13h-11zM3 3.500H.500v10H3M17 3.500h2.500v10H17"/></svg></button>
    <button class="run" aria-label="File Explorer"><svg width="22" height="20"><path d="M0 2h8l2 2h12v15H0z" fill="#ffe08a"/><path d="M0 2h8v2H0z" fill="#e8a61e"/><path d="M4 11h14v8h-4v-4H8v4H4z" fill="#35b1ea"/></svg></button>
    <button class="run" aria-label="SketchUp"><svg width="22" height="22"><path d="M1 3l14-2 6 5-1 11-14 5z" fill="#dd1616"/><path d="M3 5l9-1 4 3-6 1M5 9l6 0 6 3-9 3M7 16l5-1 3 2-8 3z" fill="#dd1616" stroke="#fff" stroke-width="1.800"/></svg></button>
    <button class="run on" aria-label="AutoCAD"><svg class="acad" width="24" height="24" viewBox="-4 -4 34 34"><use href="#logo" width="26" height="26"/></svg></button>
    <button class="run" aria-label="Chrome"><svg width="22" height="22"><circle cx="11" cy="11" r="11" fill="#fdc93c"/><path d="M11 11L1.500 5.500A11 11 0 0 1 20.500 5.500H11z" fill="#dd4b3e"/><path d="M1.500 5.500L6 13l5 4-4 5A11 11 0 0 1 1.500 5.500z" fill="#1da462"/><circle cx="11" cy="11" r="5.500" fill="#fff"/><circle cx="11" cy="11" r="4" fill="#4285f4"/></svg></button>
    <button class="run" aria-label="Zalo"><svg width="26" height="26"><rect x="1" width="23" height="24" rx="7" fill="#0b6cff"/><rect x="3" width="21" height="22" rx="7" fill="#fff"/><text x="4" y="14" class="z">Zalo</text><circle cx="18" cy="18" r="8" fill="#f00"/><text x="18" y="22" class="badge">2</text></svg></button>
    <button class="run" aria-label="Recorder"><svg width="24" height="24"><circle cx="12" cy="12" r="10.500" fill="none" stroke="#fff" stroke-width="1.500"/><circle cx="12" cy="12" r="6" fill="#f02424"/></svg></button>
  </div>
  <div class="tray">
    <button class="people" aria-label="People"><svg width="16" height="18" fill="none" stroke="#fff" stroke-width="1.300"><circle cx="10.500" cy="4" r="2.500"/><path d="M7 9c2-3 8-2 8 3"/><circle cx="5" cy="9" r="2.500"/><path d="M1 17c0-6 8-6 8 0"/></svg></button>
    <button aria-label="Show hidden icons"><svg width="12" height="8"><path d="M1 7l5-5 5 5" fill="none" stroke="#fff" stroke-width="1.300"/></svg></button>
    <button aria-label="Network"><svg width="16" height="16" fill="none" stroke="#ccc"><path d="M1 13C1 6 6 2 13 2M4 14c0-5 4-9 10-9M7 14c0-3 3-6 7-6"/><circle cx="12" cy="13" r="2" fill="#fff"/></svg></button>
    <button aria-label="Volume"><svg width="18" height="16" fill="none" stroke="#fff"><path d="M1 5.500h2.500L7.500 2v12l-4-3.500H1zM10 5q2 3 0 6M12 3q4 5 0 10M14.500 1.500q5 6.500 0 13"/></svg></button>
    <button class="pen" aria-label="Ink workspace"><svg width="18" height="18" fill="none" stroke="#fff" stroke-width="1.300"><path d="M5 12l6-10 3 1-5 11-4 2zM2 12c-3 3 2 5 4 3M9 14c4 4 8-3 4-5M14 9c1 0 2-1 3-1"/></svg></button>
    <button class="kb" aria-label="Touch keyboard"><svg width="24" height="14" fill="none" stroke="#fff"><path d="M.5.500h22v12h-22z"/><path d="M3 3.500h18M3 6.500h18" stroke-dasharray="1 1"/><path d="M6 9.500h11"/></svg></button>
    <button class="lang">ENG</button>
    <button class="clock"><time>12:39 AM</time><time>17/12/2020</time></button>
    <button class="note" aria-label="Notifications"><svg width="26" height="28"><path d="M1 3h16v13H9l-4 4v-4H1z" fill="#fff"/><path d="M3 6.500h12M3 9.500h12M3 12.500h8" stroke="#111"/><circle cx="17" cy="19" r="8" fill="#2a2b2e" stroke="#777"/><text x="17" y="23" class="badge">1</text></svg></button>
    <button class="desk" aria-label="Show desktop"></button>
  </div>
</footer>
</body>
</html>
```
FILE: styles.css
```css
* { box-sizing: border-box; }
body {
  margin: 0;
  height: 100vh;
  display: flex;
  flex-direction: column;
  overflow: hidden;
  background: #373737;
  color: #f2f2f2;
  font: 11px/15px "Open Sans", "Noto Sans", sans-serif;
}
button, input, select {
  font: inherit;
  color: inherit;
  background: none;
  border: 0;
  padding: 0;
  margin: 0;
  white-space: nowrap;
}
button {
  display: flex;
  align-items: center;
  justify-content: center;
}
input, select { appearance: none; min-width: 0; outline: 0; }
svg { display: block; flex: none; }
.defs { position: absolute; }

.caret {
  flex: none;
  width: 0;
  height: 0;
  border: 4px solid transparent;
  border-top-color: #fff;
  border-bottom: 0;
}
.caret.small { border-width: 3px 3px 0; }
.caret.dark { border-top-color: #2b3038; }
.caret.dim { border-top-color: #a8a8a8; }
.caret.gray { border-top-color: #777; }
.caret.black { border-top-color: #222; }
.caret.right { border: 4px solid transparent; border-left-color: #fff; border-right: 0; }
.caret.up { border: 4px solid transparent; border-bottom-color: #111; border-top: 0; }

/* Header */
.top {
  flex: none;
  display: grid;
  grid-template-columns: 41px 1fr;
  grid-template-rows: 24px 21px;
  background: #535353;
}
.app-btn {
  grid-row: 1 / 3;
  height: 41px;
  gap: 2px;
  padding: 0 0 9px 3px;
  border: 1px solid #111;
  background: linear-gradient(#cfcfcf, #7d7d7d 60%, #6a6a6a);
}
.titlebar { display: flex; background: #fff; min-width: 0; }
.qat {
  display: flex;
  width: 214px;
  padding-left: 5px;
  background: linear-gradient(#9a9a9a, #555);
  border-top: 1px solid #555;
}
.qat button { width: 24px; }
.qat .narrow { width: 12px; }
.qat .bar { flex-direction: column; gap: 2px; width: 16px; }
.qat .bar::before { content: ""; width: 8px; height: 2px; background: #fff; }
.titlebar h1 {
  flex: 1;
  display: flex;
  justify-content: center;
  gap: 14px;
  margin: 0;
  color: #111;
  font-size: 11px;
  font-weight: 400;
  line-height: 23px;
}
.info {
  display: flex;
  align-items: stretch;
  width: 447px;
  background: linear-gradient(#9a9a9a, #555);
  border-top: 1px solid #555;
}
.info-toggle { width: 14px; }
.info input {
  width: 180px;
  margin-bottom: 1px;
  padding-left: 4px;
  border: 1px solid #333;
  background: #727272;
  font-style: italic;
}
.info input::placeholder { color: #cfcfcf; opacity: 1; }
.info .i24 { width: 24px; }
.info .pair { width: 40px; gap: 6px; }
.info .signin { width: 122px; justify-content: flex-start; gap: 5px; padding: 0 8px 0 4px; }
.signin span { flex: 1; text-align: left; }
.info .help { flex: 1; gap: 6px; border-left: 1px solid #888; }
.win { display: flex; width: 163px; padding-left: 24px; }
.win button { flex: 1; }

.tabs {
  display: flex;
  gap: 1px;
  padding-left: 6px;
  border-top: 1px solid #2b2b2b;
  border-bottom: 1px solid #2b2b2b;
  color: #cfcfcf;
}
.tabs button { padding: 0 10px 1px; }
.tabs .on {
  padding: 0 8px 2px;
  margin: 2px 0 -1px;
  border: 1px solid #2b2b2b;
  border-bottom: 0;
  background: linear-gradient(#777, #5c5c5c);
  color: #fff;
}
.tabs .minimize { padding-left: 22px; gap: 4px; }

/* Ribbon */
.ribbon {
  flex: none;
  display: flex;
  height: 99px;
  padding-left: 2px;
  border-bottom: 1px solid #909090;
  background: linear-gradient(#545454, #373737);
}
.panel {
  display: flex;
  flex-direction: column;
  border-right: 1px solid #3a3a3a;
  background: #5c5c5c;
}
.body {
  flex: 1;
  display: grid;
  padding-top: 3px;
}
.ptitle {
  display: flex;
  align-items: center;
  justify-content: center;
  gap: 7px;
  height: 18px;
  margin: 0 1px 1px;
  padding-bottom: 2px;
  background: linear-gradient(#535353, #464646);
}
.launch { margin-left: auto; }
.draw { width: 224px; }
.modify { width: 250px; }
.annotation { width: 189px; }
.layers { width: 273px; }
.block { width: 161px; }
.properties { width: 264px; }
.groups { width: 70px; }
.utilities { width: 97px; }
.clipboard { width: 79px; }
.view { width: 62px; }
.draw .body { grid-template-columns: 42px 44px 56px 36px 1fr; }
.modify .body { grid-template-columns: 72px 69px 75px 1fr; padding-left: 7px; }
.annotation .body { grid-template-columns: 48px 58px 1fr; }
.layers .body { grid-template-columns: 62px 1fr; }
.block .body { grid-template-columns: 44px 1fr; }
.properties .body { grid-template-columns: 64px 18px 1fr; }
.groups .body { grid-template-columns: 43px 1fr; }
.utilities .body { grid-template-columns: 72px 1fr; }
.clipboard .body { grid-template-columns: 54px 1fr; }
.view .body { padding-left: 2px; }
.properties .ptitle { padding-left: 91px; padding-right: 3px; }
.view .ptitle { padding-left: 4px; padding-right: 3px; gap: 5px; }

.big {
  flex-direction: column;
  justify-content: flex-start;
  gap: 4px;
  padding-top: 2px;
}
.big .caret { margin-top: -1px; }
.col { display: grid; grid-template-rows: repeat(3, 24px); align-items: center; }
.col button { justify-content: flex-start; gap: 5px; height: 22px; }
.draw .col { padding-left: 7px; }
.draw .col button { gap: 7px; }
.annotation .col { padding-left: 7px; }
.col .spread { width: 62px; }
.col .spread span { flex: 1; text-align: left; }
.annotation .spread { width: 66px; }
.annotation .spread.wide { width: 69px; }
.block .spread { width: 110px; }
.groups .col button, .utilities .col button, .clipboard .col button { justify-content: center; width: 24px; }
.groups .active { border: 1px solid #27406e; background: linear-gradient(#7ea2dc, #5478b4); }

.combo {
  display: flex;
  align-items: center;
  height: 22px;
  padding-right: 2px;
  border: 1px solid #2f2f2f;
  background: linear-gradient(#777, #5a5a5a);
}
.combo select { flex: 1; }
.layers .combo { gap: 2px; padding-left: 3px; margin: 1px 2px 1px 0; }
.swatch { flex: none; width: 14px; height: 14px; background: #cccc00; }
.framed { border: 1px solid #000; margin: 0 3px 0 4px; }
.plain { width: 16px; height: 16px; margin: 0 10px 0 12px; border: 1px solid #aaa; }
.rule { flex: none; width: 59px; height: 1px; margin: 0 2px 0 8px; background: #fff; }
.long .rule { width: 64px; margin-left: 3px; }
.icon-row { display: flex; height: 24px; padding-left: 4px; gap: 8px; }
.icon-row .text { gap: 5px; }

/* Drawing tabs */
.filetabs {
  position: relative;
  flex: none;
  display: flex;
  height: 29px;
  padding: 3px 0 0 16px;
  border-bottom: 4px solid #5f5f5f;
}
.file {
  width: 140px;
  justify-content: space-between;
  padding: 0 23px 0 16px;
  background: linear-gradient(#848484, #5f5f5f);
  clip-path: polygon(0 100%, 3% 85%, 6% 12%, 9% 0, 85% 0, 88% 12%, 93% 85%, 100% 100%);
}
.add {
  width: 22px;
  height: 14px;
  margin-top: 5px;
  margin-left: -4px;
  border: 1px solid #696969;
  border-radius: 2px 9px 3px 8px;
  background: #505050;
}
.snip {
  position: absolute;
  left: 951px;
  top: 11px;
  z-index: 2;
  width: 173px;
  height: 22px;
  padding-left: 32px;
  line-height: 22px;
  color: #222;
  background: rgba(62, 74, 84, .55);
}

/* Viewport */
.viewport { position: relative; flex: 1; min-height: 0; background: #000; }
.drawing { position: absolute; inset: 0; }
.glow { fill: none; stroke: #12306e; stroke-width: 7px; opacity: .7; }
.core { stroke: #2456a8; stroke-width: 4px; opacity: .9; }
.axis { font: 300 19px "Open Sans", sans-serif; fill: #f2f2f2; }
.vp-label { position: absolute; left: 3px; top: 6px; display: flex; gap: 2px; margin: 0; }
.vp-win { position: absolute; right: 19px; top: 9px; display: flex; gap: 8px; }
.cube { position: absolute; right: 21px; top: 36px; display: flex; flex-direction: column; align-items: center; }
.points { font: 700 21px "Liberation Sans", sans-serif; fill: #a3a3a3; text-anchor: middle; }
.face { font: 700 13px "Open Sans", sans-serif; fill: #45464a; text-anchor: middle; }
.wcs {
  width: 48px;
  height: 18px;
  margin-top: 17px;
  gap: 6px;
  border: 1px solid #aaa;
  border-radius: 4px;
  background: #83848f;
  color: #3c3d45;
  font-family: "Liberation Sans", sans-serif;
}
.navbar {
  position: absolute;
  right: 12px;
  top: 236px;
  display: flex;
  flex-direction: column;
  align-items: center;
  width: 32px;
  height: 212px;
  border: 1px solid #555;
  border-radius: 3px;
  background: #414141;
}
.navbar button svg { fill: none; stroke: #262626; }
.navbar hr { width: 26px; margin: 4px 0 2px; border: 0; border-top: 1px solid #5a5a5a; }
.navbar .corner { align-self: flex-end; margin: 1px; }
.navbar .corner:last-child { margin-top: auto; }
.n38 { height: 38px; }
.n26 { height: 26px; }
.n28 { height: 32px; }
.edge {
  position: absolute;
  right: 1px;
  top: 0;
  bottom: 0;
  width: 7px;
  border-right: 1px solid #18c8f0;
  background: linear-gradient(#b5cde8, #dfe9f8 90px, #b5cde8 91px);
}

/* Command line */
.command {
  flex: none;
  display: flex;
  align-items: center;
  height: 27px;
  margin-right: 1px;
  padding-right: 4px;
  border: solid #777;
  border-width: 1px 0;
  background: #fff;
  color: #111;
}
.grip { width: 7px; align-self: stretch; background: linear-gradient(#777, #444); }
.prompt { gap: 3px; margin: 0 3px 0 5px; }
.cursor { width: 1px; height: 15px; background: #000; }
.command input { flex: 1; height: 20px; }

/* Status bar */
.status { flex: none; display: flex; height: 29px; justify-content: space-between; }
.layouts { display: flex; padding-left: 11px; color: #bbb; height: 18px; }
.layouts button {
  width: 65px;
  padding-bottom: 2px;
  background: linear-gradient(#4e4e4e, #666);
  clip-path: polygon(0 0, 5% 15%, 13% 85%, 18% 100%, 84% 100%, 89% 85%, 96% 15%, 100% 0);
}
.layouts .on { width: 59px; background: linear-gradient(#5a5a5a, #8a8a8a); color: #fff; font-weight: 700; }
.layouts .plus { width: 24px; height: 16px; margin-left: 3px; padding: 0; border-radius: 8px 2px 8px 4px; clip-path: none; background: #555; }
.toggles { display: flex; gap: 1px; padding: 1px 1px 2px 0; background: #2d2d2d; }
.grp { display: flex; align-items: center; border: 1px solid #777; background: #505050; }
.grp button { width: 24px; height: 24px; }
.grp .drop { width: 15px; }
.grp .model { width: 48px; padding-bottom: 1px; }
.grp .scale { width: 34px; gap: 5px; padding-bottom: 1px; }
.snug { margin-right: -1px; }
.div { align-self: stretch; width: 1px; background: #777; }
.blue svg { filter: drop-shadow(0 0 2px #0a50b0); }

/* Taskbar */
.taskbar { flex: none; display: flex; height: 40px; background: #03060b; color: #fff; }
.start { width: 48px; }
.search {
  display: flex;
  align-items: center;
  width: 344px;
  padding: 0 13px 0 9px;
  border-top: 1px solid #bbb;
  background: #f1f1f1;
  color: #222;
}
.search input { flex: 1; padding-left: 9px; font-size: 14px; }
.search input::placeholder { color: #333; opacity: 1; }
.apps { display: flex; flex: 1; }
.apps button { width: 49px; }
.apps .run { background: linear-gradient(#76b9ed, #76b9ed) bottom / 40px 2px no-repeat; }
.apps .on { background: linear-gradient(#76b9ed, #76b9ed) bottom / 49px 2px no-repeat #35373b; }
.acad { background: #f9e9e4; }
.z { font: 700 9px "Open Sans", sans-serif; fill: #0b6cff; }
.badge { font: 11px "Open Sans", sans-serif; fill: #fff; text-anchor: middle; }
.tray { display: flex; }
.tray button { width: 24px; }
.tray .people { width: 44px; padding-right: 2px; }
.tray .pen { width: 30px; }
.tray .kb { width: 33px; }
.tray .lang { width: 37px; }
.tray .clock { width: 63px; flex-direction: column; gap: 2px; line-height: 16px; }
.tray .note { width: 50px; padding-right: 2px; }
.tray .desk { width: 5px; border-left: 1px solid #444; }
```
